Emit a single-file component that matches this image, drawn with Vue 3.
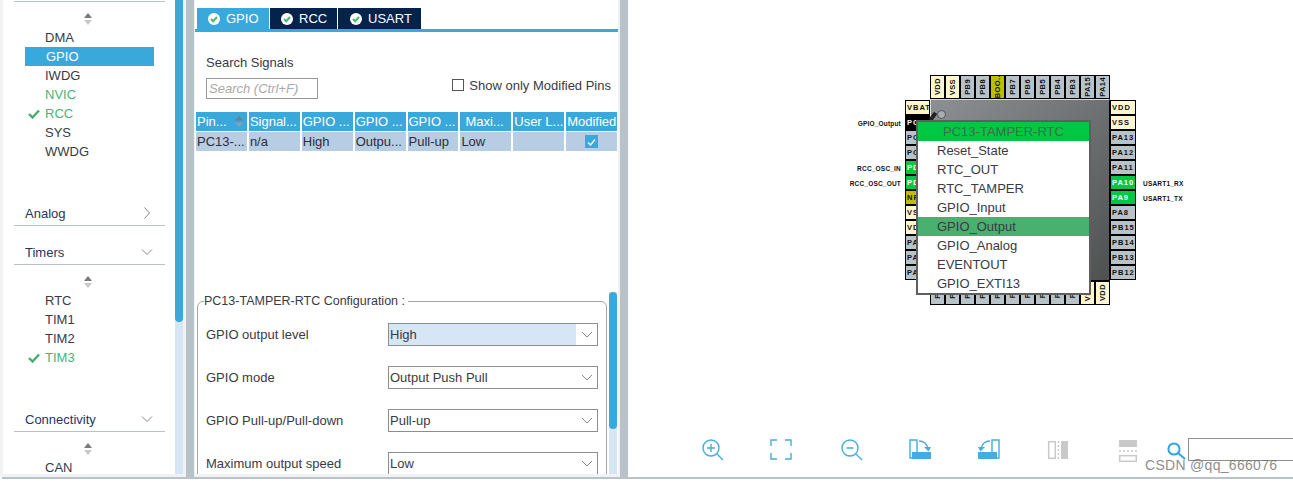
<template>
  <div class="app">
    <div class="main">
      <!-- categorias -->
      <aside class="nav">
        <div class="nav-line"></div>
        <template v-for="grupo in grupos" :key="grupo.nome">
          <div v-if="grupo.nome" class="nav-head" :class="{ 'nav-head-first': grupo.nome === 'Analog' }">
            <span>{{ grupo.nome }}</span>
            <svg width="12" height="12" viewBox="0 0 12 12" class="chev">
              <path v-if="grupo.aberto" d="M1 3.5 L6 8.5 L11 3.5" />
              <path v-else d="M3.5 0.5 L8.5 6 L3.5 11.5" />
            </svg>
          </div>
          <div v-if="grupo.itens.length" class="nav-sort">
            <svg width="10" height="12" viewBox="0 0 10 12">
              <path d="M5 0 L9 5 L1 5 Z" fill="#77797c" />
              <path d="M5 12 L9 7 L1 7 Z" fill="#c8c9ca" />
            </svg>
          </div>
          <ul v-if="grupo.itens.length" class="nav-list" :class="grupo.classe">
            <li
              v-for="item in grupo.itens"
              :key="item.nome"
              :class="{ ativo: item.ativo, ok: item.verde }"
            >
              <svg v-if="item.check" class="nav-check" width="12" height="10" viewBox="0 0 12 10">
                <path d="M1 5 L4.5 8.5 L11 1.5" />
              </svg>
              {{ item.nome }}
            </li>
          </ul>
        </template>
      </aside>
      <div class="nav-scroll"><div class="nav-thumb"></div></div>
      <div class="divider first"></div>

      <!-- painel central -->
      <section class="middle">
        <div class="tabs">
          <div v-for="(aba, i) in abas" :key="aba" class="tab" :class="{ 'tab-on': i === 0 }">
            <svg width="12" height="12" viewBox="0 0 12 12">
              <circle cx="6" cy="6" r="6" fill="#fff" />
              <path d="M3 6 L5.2 8.2 L9 4" fill="none" stroke="#4cb56f" stroke-width="2" />
            </svg>
            {{ aba }}
          </div>
        </div>
        <div class="tabs-line"></div>

        <div class="search-title">Search Signals</div>
        <div class="search-row">
          <div class="search-input">Search (Ctrl+F)</div>
          <label class="only-mod"><span class="box"></span>Show only Modified Pins</label>
        </div>

        <div class="grid">
          <div v-for="(col, i) in colunas" :key="i" class="th" :class="{ 'th-center': i === 5 }">
            {{ col }}
            <svg v-if="i === 0" class="th-sort" width="8" height="11" viewBox="0 0 8 11">
              <path d="M4 0 L8 4.5 L0 4.5 Z" fill="#6c7f8c" />
              <path d="M4 11 L8 6.5 L0 6.5 Z" fill="#7fa3bd" />
            </svg>
          </div>
          <div v-for="(cel, i) in linha" :key="'c' + i" class="td">{{ cel }}</div>
          <div class="td td-check">
            <span class="tick">
              <svg width="13" height="13" viewBox="0 0 13 13">
                <path d="M3 6.5 L5.5 9 L10 3.5" fill="none" stroke="#fff" stroke-width="1.4" />
              </svg>
            </span>
          </div>
        </div>

        <div class="config">
          <fieldset class="config-box">
            <legend>PC13-TAMPER-RTC Configuration :</legend>
            <div v-for="campo in campos" :key="campo.nome" class="field">
              <span>{{ campo.nome }}</span>
              <div class="select" :class="{ 'select-on': campo.ativo }">
                <span class="select-value">{{ campo.valor }}</span>
                <span class="select-arrow">
                  <svg width="12" height="7" viewBox="0 0 12 7"><path d="M1 1 L6 6 L11 1" /></svg>
                </span>
              </div>
            </div>
          </fieldset>
          <div class="config-scroll"><div class="config-thumb"></div></div>
        </div>
      </section>
      <div class="divider"></div>

      <!-- chip -->
      <section class="canvas">
        <div class="chip">
          <div class="pins-top">
            <div v-for="(p, i) in pinosTopo" :key="i" class="pin pin-v" :class="p.tipo">
              <span>{{ p.nome }}</span>
            </div>
          </div>
          <div class="pins-left">
            <div v-for="(p, i) in pinosEsq" :key="i" class="pin pin-h" :class="p.tipo">
              <span>{{ p.nome }}</span>
              <em v-if="p.sinal" class="signal signal-l">{{ p.sinal }}</em>
            </div>
          </div>
          <div class="body">
            <span class="dot"></span>
            <span class="tip"></span>
          </div>
          <div class="pins-right">
            <div v-for="(p, i) in pinosDir" :key="i" class="pin pin-h" :class="p.tipo">
              <span>{{ p.nome }}</span>
              <em v-if="p.sinal" class="signal signal-r">{{ p.sinal }}</em>
            </div>
          </div>
          <div class="pins-bottom">
            <div v-for="(p, i) in pinosBase" :key="i" class="pin pin-v" :class="p.tipo">
              <span>{{ p.nome }}</span>
            </div>
          </div>
        </div>

        <div class="menu">
          <div class="menu-title">PC13-TAMPER-RTC</div>
          <div v-for="op in opcoes" :key="op" class="menu-item" :class="{ 'menu-on': op === 'GPIO_Output' }">
            {{ op }}
          </div>
        </div>

        <div class="toolbar">
          <svg class="tool" viewBox="0 0 24 24" fill="none" stroke="#45ace0" stroke-width="1.4">
            <circle cx="11" cy="10" r="8" />
            <path d="M17 16 L23 22 M7 10 H15 M11 6 V14" />
          </svg>
          <svg class="tool" viewBox="0 0 24 24" fill="none" stroke="#45ace0" stroke-width="1.4">
            <path d="M2 8 V2 H8 M16 2 H22 V8 M22 15 V21 H16 M8 21 H2 V15" />
          </svg>
          <svg class="tool" viewBox="0 0 24 24" fill="none" stroke="#45ace0" stroke-width="1.4">
            <circle cx="11" cy="10" r="8" />
            <path d="M17 16 L23 22 M7.5 10 H14.5" />
          </svg>
          <svg class="tool" viewBox="0 0 24 24" fill="none" stroke="#45ace0" stroke-width="1.4">
            <path d="M10 20 H2 V2 H9 V14" />
            <rect x="4" y="14" width="19" height="7" fill="#45ace0" stroke="none" />
            <path d="M11 3 C16 3 19 6 20 11" />
            <path d="M16 9 L23 9 L20.5 13.5 Z" fill="#45ace0" stroke="none" />
          </svg>
          <svg class="tool" viewBox="0 0 24 24" fill="none" stroke="#45ace0" stroke-width="1.4">
            <path d="M14 20 H22 V2 H15 V14" />
            <rect x="1" y="14" width="19" height="7" fill="#45ace0" stroke="none" />
            <path d="M13 3 C8 3 5 6 4 11" />
            <path d="M8 9 L1 9 L3.5 13.5 Z" fill="#45ace0" stroke="none" />
          </svg>
          <svg class="tool" viewBox="0 0 24 24" fill="none" stroke="#c9c9c9" stroke-width="1.5">
            <rect x="2.7" y="3.7" width="6.6" height="16.6" />
            <path d="M12.5 3 V21" stroke-dasharray="2 2" />
            <rect x="15" y="3" width="7" height="18" fill="#c9c9c9" stroke="none" />
          </svg>
          <svg class="tool" viewBox="0 0 24 24" fill="none" stroke="#c9c9c9" stroke-width="1.5">
            <rect x="3" y="2" width="18" height="7" fill="#c9c9c9" stroke="none" />
            <path d="M3 13 H21" stroke-dasharray="2 2" />
            <rect x="3.7" y="17.7" width="16.6" height="5.6" />
          </svg>
          <svg class="lupa" width="20" height="24" viewBox="0 0 20 24" fill="none" stroke="#2fa3dd" stroke-width="2">
            <circle cx="7" cy="11" r="5.6" />
            <path d="M11 15 L18 21" />
          </svg>
          <div class="find-box"></div>
        </div>

        <div class="mark">CSDN @qq_666076</div>
      </section>
    </div>
    <div class="foot-line"></div>
  </div>
</template>

<script setup>
// Dados das listas
const grupos = [
  {
    nome: "",
    classe: "lista-sys",
    itens: [
      { nome: "DMA" },
      { nome: "GPIO", ativo: true },
      { nome: "IWDG" },
      { nome: "NVIC", verde: true },
      { nome: "RCC", verde: true, check: true },
      { nome: "SYS" },
      { nome: "WWDG" }
    ]
  },
  { nome: "Analog", aberto: false, itens: [] },
  {
    nome: "Timers",
    aberto: true,
    classe: "lista-tim",
    itens: [
      { nome: "RTC" },
      { nome: "TIM1" },
      { nome: "TIM2" },
      { nome: "TIM3", verde: true, check: true }
    ]
  },
  { nome: "Connectivity", aberto: true, itens: [{ nome: "CAN" }] }
];

const abas = ["GPIO", "RCC", "USART"];
const colunas = ["Pin...", "Signal...", "GPIO ...", "GPIO ...", "GPIO ...", "Maxi...", "User L...", "Modified"];
const linha = ["PC13-...", "n/a", "High", "Outpu...", "Pull-up", "Low", ""];

const campos = [
  { nome: "GPIO output level", valor: "High", ativo: true },
  { nome: "GPIO mode", valor: "Output Push Pull" },
  { nome: "GPIO Pull-up/Pull-down", valor: "Pull-up" },
  { nome: "Maximum output speed", valor: "Low" }
];

const opcoes = [
  "Reset_State",
  "RTC_OUT",
  "RTC_TAMPER",
  "GPIO_Input",
  "GPIO_Output",
  "GPIO_Analog",
  "EVENTOUT",
  "GPIO_EXTI13"
];

const pino = (nome, tipo = "cinza", sinal = "") => ({ nome, tipo, sinal });

const pinosTopo = [
  pino("VDD", "creme"), pino("VSS", "creme"), pino("PB9"), pino("PB8"), pino("BOO..", "oliva"), pino("PB7"),
  pino("PB6"), pino("PB5"), pino("PB4"), pino("PB3"), pino("PA15"), pino("PA14")
];
const pinosEsq = [
  pino("VBAT", "creme"), pino("PC", "preto", "GPIO_Output"), pino("PC"), pino("PC"),
  pino("PD", "verde", "RCC_OSC_IN"), pino("PD", "verde", "RCC_OSC_OUT"), pino("NR", "oliva"),
  pino("VS", "creme"), pino("VD", "creme"), pino("PA"), pino("PA"), pino("PA")
];
const pinosDir = [
  pino("VDD", "creme"), pino("VSS", "creme"), pino("PA13"), pino("PA12"), pino("PA11"),
  pino("PA10", "verde", "USART1_RX"), pino("PA9", "verde", "USART1_TX"), pino("PA8"),
  pino("PB15"), pino("PB14"), pino("PB13"), pino("PB12")
];
const pinosBase = [
  pino("PA"), pino("PA"), pino("PA"), pino("PA"), pino("PA"), pino("PB"),
  pino("PB"), pino("PB"), pino("PB"), pino("PB"), pino("VSS", "creme"), pino("VDD", "creme")
];
</script>

<style>
html, body {
  margin: 0;
  background: #fff;
  overflow: hidden;
}
</style>

<style scoped>
.app {
  width: 1293px;
  height: 483px;
  overflow: hidden;
  font-family: "Liberation Sans", Arial, sans-serif;
  font-size: 13px;
  color: #3a3a44;
  background: #fff;
}

.main {
  display: flex;
  height: 477px;
  background: #f1f2f3;
}

.foot-line {
  height: 2px;
  margin-left: 2px;
  background: #b7c2c9;
}

/* categorias */
.nav {
  width: 172px;
  height: 474px;
  margin-left: 3px;
  overflow: hidden;
  background: #fff;
}

.nav-line {
  height: 1px;
  margin: 1px 10px 0 11px;
  background: #b7c2c9;
}

.nav-sort {
  display: flex;
  justify-content: center;
  align-items: flex-start;
  height: 26px;
  padding-top: 11px;
  box-sizing: border-box;
  width: 170px;
}

.nav-list {
  margin: 0;
  padding: 0;
  list-style: none;
}

.nav-list li {
  position: relative;
  height: 19px;
  line-height: 19px;
  margin: 0 21px 0 22px;
  padding-left: 20px;
}

.nav-list li.ativo {
  background: #39a9dc;
  color: #fff;
  padding-left: 21px;
}

.nav-list li.ok {
  color: #3fb57a;
}

.nav-check {
  position: absolute;
  left: 3px;
  top: 5px;
  fill: none;
  stroke: #45ad6e;
  stroke-width: 2.4;
}

.lista-sys {
  height: 174px;
}

.lista-tim {
  height: 117px;
}

.nav-head {
  display: flex;
  justify-content: space-between;
  align-items: center;
  height: 24px;
  margin: 0 10px 0 11px;
  padding: 0 13px 2px 11px;
  box-sizing: border-box;
  border-bottom: 1px solid #b7c2c9;
  color: #1f3468;
}

.nav-head-first {
  margin-bottom: 15px;
}

.nav-head span {
  margin-top: 2px;
}

.chev {
  fill: none;
  stroke: #888;
  stroke-width: 1;
  margin-right: -1px;
}

.nav-scroll {
  width: 8px;
  height: 474px;
  background: #d6e6f4;
}

.nav-thumb {
  height: 322px;
  background: #39a9dc;
  border-radius: 0 0 4px 4px;
}

.divider {
  width: 8px;
  background: #b7c2c9;
}

.divider.first {
  margin-left: 3px;
  margin-right: 1px;
}

/* painel central */
.middle {
  width: 425px;
  height: 474px;
  overflow: hidden;
  background: #fff;
  box-sizing: border-box;
  border-right: 2px solid #f1f2f3;
}

.tabs {
  display: flex;
  gap: 1px;
  padding: 8px 0 0 2px;
}

.tab {
  display: flex;
  align-items: center;
  gap: 6px;
  height: 21px;
  padding-left: 11px;
  box-sizing: border-box;
  width: 67px;
  background: #03234b;
  color: #fff;
}

.tab-on {
  width: 72px;
  background: #39a9dc;
  padding-left: 11px;
}

.tab:last-child {
  width: 83px;
  padding-left: 12px;
}

.tabs-line {
  height: 3px;
  background: #39a9dc;
}

.search-title {
  height: 18px;
  line-height: 18px;
  margin: 22px 0 0 11px;
}

.search-row {
  display: flex;
  justify-content: space-between;
  align-items: flex-start;
  margin: 6px 7px 0 11px;
}

.search-input {
  width: 112px;
  height: 21px;
  line-height: 19px;
  box-sizing: border-box;
  border: 1px solid #999;
  padding-left: 2px;
  font-style: italic;
  color: #a9a9a9;
}

.only-mod {
  display: flex;
  align-items: center;
  gap: 5px;
  height: 14px;
}

.box {
  width: 12px;
  height: 12px;
  box-sizing: border-box;
  border: 1px solid #555;
  background: #fff;
}

.grid {
  display: grid;
  grid-template-columns: repeat(8, 1fr);
  column-gap: 2px;
  row-gap: 1px;
  width: 421px;
  margin: 13px 0 0 1px;
}

.th {
  position: relative;
  height: 19px;
  line-height: 19px;
  padding-left: 1px;
  background: #39a9dc;
  color: #fff;
  white-space: nowrap;
  overflow: hidden;
}

.th-center {
  padding-left: 5px;
}

.th-sort {
  position: absolute;
  right: 4px;
  top: 4px;
}

.td {
  height: 19px;
  line-height: 19px;
  padding-left: 1px;
  background: #b7cde3;
  color: #2e2e3a;
  white-space: nowrap;
  overflow: hidden;
}

.td-check {
  display: flex;
  justify-content: center;
  align-items: center;
  padding-left: 0;
}

.tick {
  display: block;
  width: 13px;
  height: 13px;
  background: #39a9dc;
}

.config {
  display: flex;
  align-items: flex-start;
  height: 182px;
  margin: 141px 0 0 2px;
}

.config-box {
  width: 410px;
  min-width: 0;
  height: 240px;
  margin: 0;
  padding: 13px 8px 0;
  box-sizing: border-box;
  border: 1px solid #a6a6a6;
  border-radius: 6px;
}

.config-box legend {
  height: 18px;
  line-height: 18px;
  padding: 0 3px 0 0;
  margin-left: -2px;
  font-size: 12.5px;
}

.field {
  display: grid;
  grid-template-columns: 182px 210px;
  align-items: center;
  height: 23px;
  margin-bottom: 20px;
}

.select {
  display: flex;
  height: 23px;
  box-sizing: border-box;
  border: 1px solid #8e8e8e;
  line-height: 21px;
}

.select-value {
  flex: 1;
  padding-left: 1px;
}

.select-on .select-value {
  background: #d6e6f4;
}

.select-arrow {
  display: flex;
  justify-content: center;
  align-items: center;
  width: 21px;
  fill: none;
  stroke: #888;
}

.config-scroll {
  width: 8px;
  height: 182px;
  margin-left: 2px;
  background: #d6e6f4;
}

.config-thumb {
  height: 137px;
  background: #39a9dc;
  border-radius: 4px;
}

/* chip */
.canvas {
  position: relative;
  flex: 1;
  background: #fff;
  overflow: hidden;
}

.chip {
  position: absolute;
  left: 277px;
  top: 75px;
  display: grid;
  grid-template-columns: 25px 180px 26px;
  grid-template-rows: 24px 182px 24px;
}

.pins-top {
  grid-column: 2;
  grid-row: 1;
  display: flex;
}

.pins-bottom {
  grid-column: 2;
  grid-row: 3;
  display: flex;
}

.pins-left,
.pins-right {
  grid-row: 2;
  display: flex;
  flex-direction: column;
  margin-top: 1px;
}

.pins-left {
  grid-column: 1;
}

.pins-right {
  grid-column: 3;
}

.pin {
  position: relative;
  box-sizing: border-box;
  border: 1px solid #000;
  display: flex;
  align-items: center;
  font-size: 7.5px;
  font-weight: 700;
  letter-spacing: 1px;
  color: #111;
}

.pin-v {
  width: 15px;
  height: 24px;
  justify-content: center;
  letter-spacing: 0.4px;
  white-space: nowrap;
}

.pin-v span {
  writing-mode: vertical-rl;
  transform: rotate(180deg);
}

.pin-h {
  height: 15px;
  padding-left: 1px;
  overflow: visible;
}

.cinza {
  background: #b7c2c9;
}

.creme {
  background: #fff6cf;
}

.oliva {
  background: #bcbf00;
}

.verde {
  background: #00c843;
  color: #fff;
}

.preto {
  background: #000;
  color: #fff;
}

.signal {
  position: absolute;
  top: 4px;
  font-style: normal;
  font-size: 6.5px;
  font-weight: 700;
  letter-spacing: 0.2px;
  color: #111;
  white-space: nowrap;
}

.signal-l {
  right: calc(100% + 5px);
}

.signal-r {
  left: calc(100% + 8px);
}

.body {
  grid-column: 2;
  grid-row: 2;
  position: relative;
  background: linear-gradient(135deg, #8c9094, #4e5150);
  box-sizing: border-box;
  border: 1px solid #d8dadb;
  border-right-color: #000;
  border-bottom-color: #000;
}

.dot {
  position: absolute;
  left: 6px;
  top: 10px;
  width: 9px;
  height: 9px;
  box-sizing: border-box;
  border: 1px solid #555;
  border-radius: 50%;
  background: #a8adb0;
}

.tip {
  position: absolute;
  left: 0;
  top: 12px;
  width: 4px;
  height: 9px;
  background: #222;
  transform: rotate(35deg);
}

.menu {
  position: absolute;
  left: 288px;
  top: 120px;
  width: 175px;
  height: 175px;
  box-sizing: border-box;
  border: 2px solid #5f5f5f;
  background: #fff;
}

.menu-title {
  height: 19px;
  line-height: 19px;
  text-align: center;
  background: #00c843;
  color: #3e6a50;
}

.menu-item {
  height: 19px;
  line-height: 19px;
  padding-left: 19px;
  color: #3a3a44;
}

.menu-on {
  background: #4ab070;
}

.toolbar {
  position: absolute;
  left: 72px;
  top: 438px;
  display: flex;
  align-items: flex-start;
  gap: 45.3px;
}

.tool {
  width: 24px;
  height: 24px;
}

.lupa {
  margin-left: -18px;
}

.find-box {
  width: 120px;
  height: 23px;
  margin-left: -44px;
  box-sizing: border-box;
  border: 1px solid #8e8e8e;
  background: transparent;
}

.mark {
  position: absolute;
  left: 517px;
  top: 457px;
  font-size: 14px;
  letter-spacing: 0.3px;
  color: rgba(110, 110, 110, 0.8);
  white-space: nowrap;
}
</style>
